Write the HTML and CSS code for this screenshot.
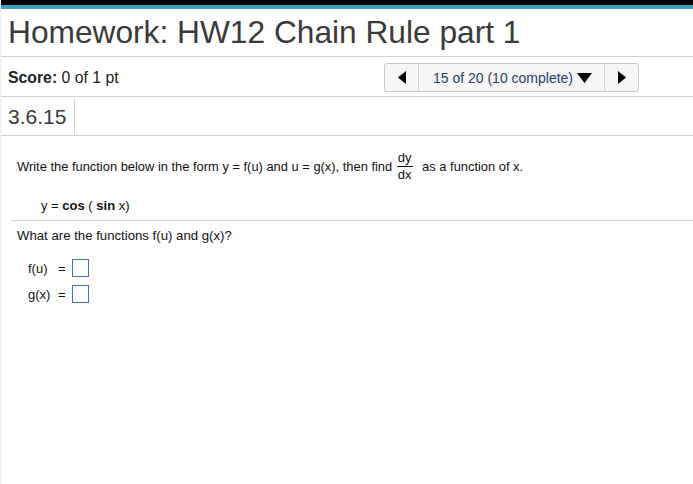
FILE: index.html
```html
<!DOCTYPE html>
<html>
<head>
<meta charset="utf-8">
<link rel="stylesheet" href="styles.css">
</head>
<body>
<div class="page">
  <div class="topbar"></div>
  <div class="accent"></div>
  <h1 class="title">Homework: HW12 Chain Rule part 1</h1>
  <div class="scorebar">
    <div class="score"><b>Score:</b> 0 of 1 pt</div>
    <div class="nav">
      <div class="navbtn"><svg width="10" height="13" viewBox="0 0 10 13"><polygon points="9,0 9,13 1,6.5" fill="#000"/></svg></div>
      <div class="navmid">15 of 20 (10 complete) <svg width="15" height="10" viewBox="0 0 15 10"><polygon points="0,0 15,0 7.5,10" fill="#000"/></svg></div>
      <div class="navbtn"><svg width="10" height="13" viewBox="0 0 10 13"><polygon points="1,0 1,13 9,6.5" fill="#000"/></svg></div>
    </div>
  </div>
  <div class="qnumrow"><div class="qnum">3.6.15</div></div>
  <div class="content">
    <p class="prompt">Write the function below in the form y = f(u) and u = g(x), then find <span class="frac"><span class="num">dy</span><span class="den">dx</span></span> as a function of x.</p>
    <p class="expr">y = <b>cos</b> ( <b>sin</b> x)</p>
    <div class="rule"></div>
    <p class="ask">What are the functions f(u) and g(x)?</p>
    <div class="answers">
      <div class="ans"><span class="lbl">f(u)</span><span class="eq">=</span><span class="box"></span></div>
      <div class="ans"><span class="lbl">g(x)</span><span class="eq">=</span><span class="box"></span></div>
    </div>
  </div>
</div>
</body>
</html>
```
FILE: styles.css
```css
html, body {
  margin: 0;
  padding: 0;
  background: #fff;
}
body {
  font-family: "Liberation Sans", Arial, sans-serif;
  color: #222;
}
.page {
  min-height: 484px;
  border-left: 1px solid #ececec;
  box-sizing: border-box;
}
.topbar {
  height: 5px;
  background: #000;
}
.accent {
  height: 4px;
  background: #3d9dc0;
}
.title {
  margin: 0;
  height: 47px;
  padding: 0 0 0 7px;
  font-size: 31.7px;
  font-weight: normal;
  line-height: 47px;
  color: #3a3a3a;
  border-bottom: 1px solid #cdd2de;
}
.scorebar {
  height: 39px;
  display: flex;
  align-items: center;
  justify-content: space-between;
  border-bottom: 1px solid #cdd2de;
  padding-left: 7px;
}
.score {
  font-size: 15.8px;
  color: #222;
  padding-top: 2px;
}
.nav {
  display: flex;
  margin-right: 54px;
  margin-top: 2px;
  height: 27px;
  border: 1px solid #c8c8c8;
  border-radius: 3px;
  background: #f6f6f6;
}
.navbtn {
  width: 33px;
  display: flex;
  align-items: center;
  justify-content: center;
}
.navbtn + .navmid, .navmid + .navbtn {
  border-left: 1px solid #d2d2d2;
}
.navmid {
  width: 186px;
  display: flex;
  align-items: center;
  justify-content: center;
  gap: 4px;
  font-size: 14px;
  color: #2a3f66;
  padding-left: 2px;
  box-sizing: border-box;
}
.qnumrow {
  height: 38px;
  border-bottom: 1px solid #cdd2de;
  display: flex;
}
.qnum {
  font-size: 21px;
  color: #3a3a3a;
  padding: 0 7px;
  margin: 2px 0 1px;
  border-right: 1px solid #cdd2de;
  display: flex;
  align-items: center;
  width: 59px;
}
.content {
  padding-left: 10px;
}
.prompt {
  margin: 15px 0 0 6px;
  font-size: 12.9px;
  color: #111;
  display: flex;
  align-items: center;
  white-space: pre;
}
.frac {
  display: inline-flex;
  flex-direction: column;
  align-items: center;
  margin: 0 6px 0 1px;
  font-size: 13px;
}
.frac .num {
  border-bottom: 1px solid #111;
  padding: 0 1px 1px;
  line-height: 14px;
}
.frac .den {
  line-height: 14px;
  padding-top: 1px;
}
.expr {
  margin: 16px 0 0 30px;
  font-size: 13px;
  color: #111;
}
.rule {
  margin-top: 7px;
  border-top: 1px solid #cdd2de;
}
.ask {
  margin: 7px 0 0 6px;
  font-size: 13.2px;
  color: #111;
}
.answers {
  margin: 16px 0 0 17px;
  display: flex;
  flex-direction: column;
  gap: 8px;
}
.ans {
  display: flex;
  align-items: center;
  font-size: 13px;
  color: #111;
}
.lbl {
  width: 30px;
}
.eq {
  width: 14px;
}
.box {
  width: 15px;
  height: 16px;
  border: 1.5px solid #3d6fd6;
}
```
